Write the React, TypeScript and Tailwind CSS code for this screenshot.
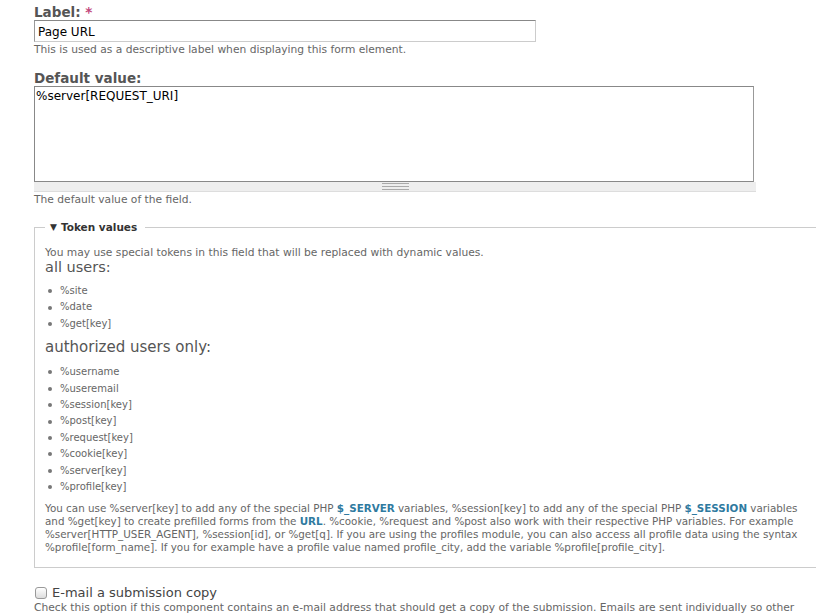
export default function App() {
  const allUsers = ['%site', '%date', '%get[key]'];
  const authUsers = [
    '%username',
    '%useremail',
    '%session[key]',
    '%post[key]',
    '%request[key]',
    '%cookie[key]',
    '%server[key]',
    '%profile[key]',
  ];

  return (
    <div className="w-[816px] h-[614px] overflow-hidden bg-white pl-[34px] font-['DejaVu_Sans',sans-serif] text-[#494949]">
      {/* Label field */}
      <div className="pt-[4px]">
        <label className="block text-[13.5px] leading-[16px] font-bold text-[#555]">
          Label: <span className="text-[#c1467b]">*</span>
        </label>
        <div className="w-[502px] h-[22px] border border-t-[#888] border-l-[#999] border-r-[#ccc] border-b-[#ccc] flex items-center px-[3px] pt-[1px] text-[12px] text-black">
          Page URL
        </div>
        <div className="mt-[1px] text-[10.7px] leading-[13px] text-[#666]">
          This is used as a descriptive label when displaying this form element.
        </div>
      </div>

      {/* Default value */}
      <div className="mt-[14px]">
        <label className="block text-[13.5px] leading-[16px] font-bold text-[#555]">Default value:</label>
        <div className="w-[720px] h-[96px] border border-[#888] border-r-[#999] px-[1px] pt-[1px] text-[12px] leading-[16px] text-black">
          %server[REQUEST_URI]
        </div>
        <div className="w-[722px] h-[10px] bg-[#eee] border-b border-[#ddd] flex items-center justify-center">
          <div className="w-[27px] flex flex-col gap-[2px]">
            <div className="h-px bg-[#aaa]" />
            <div className="h-px bg-[#aaa]" />
            <div className="h-px bg-[#aaa]" />
          </div>
        </div>
        <div className="mt-[1px] text-[10.7px] leading-[13px] text-[#666]">The default value of the field.</div>
      </div>

      {/* Token values fieldset */}
      <fieldset className="mt-[14px] w-[820px] border border-[#ccc] border-r-0 pl-[10px] pr-[22px] pb-[12px]">
        <legend className="px-[5px] pr-[8px] text-[10.5px] font-bold text-[#333] flex items-center gap-[4px]">
          <span className="text-[9px] leading-none">▼</span>
          Token values
        </legend>
        <div className="text-[10.7px] leading-[13px] text-[#666] mt-[10px]">
          You may use special tokens in this field that will be replaced with dynamic values.
        </div>
        <h3 className="text-[14.5px] leading-[17px] text-[#555]">all users:</h3>
        <ul className="mt-[7px] text-[10px] leading-[16.5px] text-[#666]">
          {allUsers.map((t) => (
            <li key={t} className="flex items-center">
              <span className="w-[4px] h-[4px] rounded-full bg-[#777] ml-[3px] mr-[8px]" />
              {t}
            </li>
          ))}
        </ul>
        <h3 className="mt-[7px] text-[15px] leading-[17px] text-[#555]">authorized users only:</h3>
        <ul className="mt-[8px] text-[10px] leading-[16.4px] text-[#666]">
          {authUsers.map((t) => (
            <li key={t} className="flex items-center">
              <span className="w-[4px] h-[4px] rounded-full bg-[#777] ml-[3px] mr-[8px]" />
              {t}
            </li>
          ))}
        </ul>
        <p className="mt-[6px] text-[10.35px] leading-[13.3px] text-[#666] whitespace-nowrap">
          You can use %server[key] to add any of the special PHP{' '}
          <a className="font-bold text-[#2f7a9f]">$_SERVER</a> variables, %session[key] to add any of the special
          PHP <a className="font-bold text-[#2f7a9f]">$_SESSION</a> variables
          <br />
          and %get[key] to create prefilled forms from the <a className="font-bold text-[#2f7a9f]">URL</a>. %cookie,
          %request and %post also work with their respective PHP variables. For example
          <br />
          %server[HTTP_USER_AGENT], %session[id], or %get[q]. If you are using the profiles module, you can also
          access all profile data using the syntax
          <br />
          %profile[form_name]. If you for example have a profile value named profile_city, add the variable
          %profile[profile_city].
        </p>
      </fieldset>

      {/* E-mail checkbox */}
      <div className="mt-[17px]">
        <label className="flex items-center gap-[5px] text-[13px] leading-[16px] text-[#444]">
          <span className="ml-[1px] w-[12px] h-[12px] rounded-[3px] border border-[#999] bg-gradient-to-b from-white to-[#ddd]" />
          E-mail a submission copy
        </label>
        <div className="text-[10.7px] leading-[13px] text-[#666] whitespace-nowrap">
          Check this option if this component contains an e-mail address that should get a copy of the submission.
          Emails are sent individually so other
        </div>
      </div>
    </div>
  );
}
